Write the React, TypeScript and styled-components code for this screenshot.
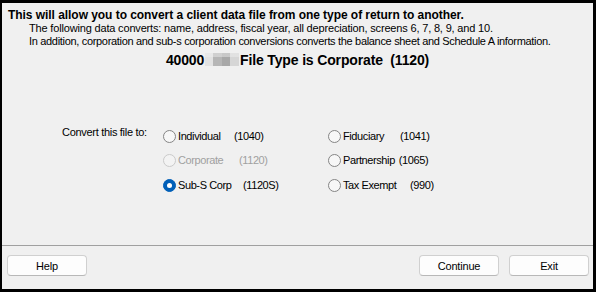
import React from 'react';
import styled, { createGlobalStyle } from 'styled-components';

const GlobalStyle = createGlobalStyle`
  html, body {
    margin: 0;
    padding: 0;
    background: #000;
  }
  body {
    font-family: "Liberation Sans", Arial, sans-serif;
    color: #000;
  }
`;

const Dialog = styled.div`
  width: 596px;
  height: 292px;
  box-sizing: border-box;
  border-style: solid;
  border-color: #000;
  border-width: 3px 3px 3px 2px;
  background: #f0f0f0;
  display: flex;
  flex-direction: column;
`;

const Body = styled.section`
  flex: 1;
  padding-top: 6px;
`;

const Title = styled.div`
  margin-left: 6px;
  font-size: 12px;
  font-weight: bold;
  line-height: 13px;
  letter-spacing: -0.05px;
  white-space: nowrap;
`;

const InfoLine = styled.div<{ $spacing: number }>`
  padding-left: 27px;
  font-size: 11px;
  line-height: 13px;
  letter-spacing: ${p => p.$spacing}px;
  white-space: nowrap;
`;

const FileType = styled.div`
  margin-top: 4px;
  text-align: center;
  font-size: 14px;
  font-weight: bold;
  line-height: 16px;
  letter-spacing: -0.15px;
  white-space: pre;
`;

const Redacted = styled.span`
  display: inline-block;
  width: 34px;
  height: 13px;
  margin: 0 1px;
  vertical-align: -1px;
  background:
    linear-gradient(to bottom, rgba(240, 240, 240, 0.45) 0 4px, transparent 4px),
    linear-gradient(
      to right,
      #e2e2e2 0 8px,
      #b6b6b6 8px 17px,
      #a8a8a8 17px 25px,
      #d6d6d6 25px 34px
    );
`;

const ConvertRow = styled.div`
  margin-top: 56px;
  padding-left: 60px;
  display: flex;
  align-items: flex-start;
`;

const ConvertLabel = styled.div`
  width: 101px;
  margin-top: 2px;
  font-size: 11px;
  line-height: 13px;
  letter-spacing: -0.3px;
`;

const OptionGrid = styled.div`
  display: grid;
  grid-template-columns: 165px auto;
  grid-template-rows: repeat(3, 24.5px);
  grid-auto-flow: column;
`;

const Option = styled.label<{ $disabled?: boolean }>`
  display: flex;
  align-items: center;
  gap: 2px;
  font-size: 11px;
  line-height: 13px;
  letter-spacing: -0.4px;
  color: ${p => (p.$disabled ? '#a0a0a0' : '#000')};
  white-space: nowrap;
`;

const Radio = styled.span<{ $checked?: boolean; $disabled?: boolean }>`
  width: 13px;
  height: 13px;
  box-sizing: border-box;
  border-radius: 50%;
  flex: none;
  display: flex;
  align-items: center;
  justify-content: center;
  border: 1px solid
    ${p => (p.$checked ? '#005fb8' : p.$disabled ? '#cacaca' : '#858585')};
  background: ${p => (p.$checked ? '#005fb8' : p.$disabled ? '#f3f3f3' : '#f7f7f7')};

  &::after {
    content: '';
    display: ${p => (p.$checked ? 'block' : 'none')};
    width: 5px;
    height: 5px;
    border-radius: 50%;
    background: #fff;
  }
`;

const Name = styled.span<{ $w: number }>`
  display: inline-block;
  min-width: ${p => p.$w - 2}px;
  margin-right: 2px;
`;

const Footer = styled.footer`
  flex: none;
  height: 34px;
  box-sizing: content-box;
  border-top: 1px solid #a0a0a0;
  padding: 9px 4px 0 5px;
  display: flex;
  align-items: flex-start;
  gap: 10px;
`;

const Spacer = styled.div`
  flex: 1;
`;

const Button = styled.button`
  width: 80px;
  height: 21px;
  padding: 0;
  box-sizing: border-box;
  border: 1px solid #d0d0d0;
  border-bottom-color: #b8b8b8;
  border-radius: 4px;
  background: #fdfdfd;
  font-family: "Liberation Sans", Arial, sans-serif;
  font-size: 11px;
  letter-spacing: -0.2px;
  color: #000;
`;

type Choice = {
  name: string;
  code: string;
  w: number;
  checked?: boolean;
  disabled?: boolean;
};

const choices: Choice[] = [
  { name: 'Individual', code: '(1040)', w: 54 },
  { name: 'Corporate', code: '(1120)', w: 59, disabled: true },
  { name: 'Sub-S Corp', code: '(1120S)', w: 63, checked: true },
  { name: 'Fiduciary', code: '(1041)', w: 55 },
  { name: 'Partnership', code: '(1065)', w: 53 },
  { name: 'Tax Exempt', code: '(990)', w: 65 },
];

export default function App() {
  return (
    <>
      <GlobalStyle />
      <Dialog>
        <Body>
          <Title>This will allow you to convert a client data file from one type of return to another.</Title>
          <InfoLine $spacing={-0.17}>
            The following data converts: name, address, fiscal year, all depreciation, screens 6, 7, 8, 9, and 10.
          </InfoLine>
          <InfoLine $spacing={-0.32}>
            In addition, corporation and sub-s corporation conversions converts the balance sheet and Schedule A information.
          </InfoLine>
          <FileType>
            40000<Redacted />{'File Type is Corporate  (1120)'}
          </FileType>
          <ConvertRow>
            <ConvertLabel>Convert this file to:</ConvertLabel>
            <OptionGrid>
              {choices.map(c => (
                <Option key={c.name} $disabled={c.disabled}>
                  <Radio $checked={c.checked} $disabled={c.disabled} />
                  <Name $w={c.w}>{c.name}</Name>
                  <span>{c.code}</span>
                </Option>
              ))}
            </OptionGrid>
          </ConvertRow>
        </Body>
        <Footer>
          <Button>Help</Button>
          <Spacer />
          <Button>Continue</Button>
          <Button>Exit</Button>
        </Footer>
      </Dialog>
    </>
  );
}
